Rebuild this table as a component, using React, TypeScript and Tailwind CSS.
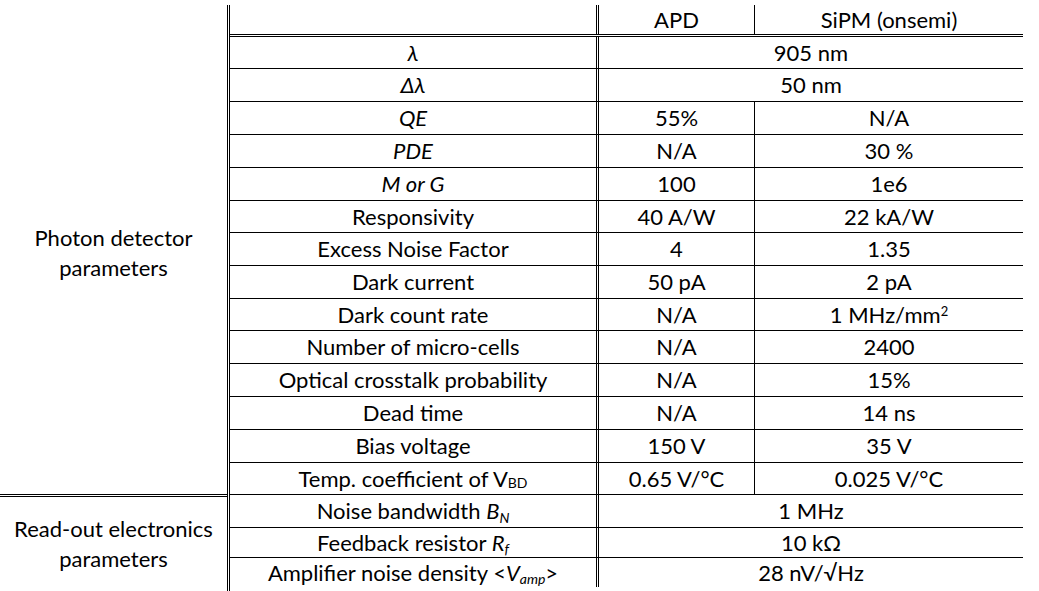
import React from "react";

type Row = {
  label: React.ReactNode;
  apd?: React.ReactNode;
  sipm?: React.ReactNode;
  both?: React.ReactNode;
  h: string;
  last?: boolean;
};

const detectorRows: Row[] = [
  { label: <i>λ</i>, both: "905 nm", h: "h-[32px]" },
  { label: <i>Δλ</i>, both: "50 nm", h: "h-[33px]" },
  { label: <i>QE</i>, apd: "55%", sipm: "N/A", h: "h-[33px]" },
  { label: <i>PDE</i>, apd: "N/A", sipm: "30 %", h: "h-[33px]" },
  { label: <i>M or G</i>, apd: "100", sipm: "1e6", h: "h-[33px]" },
  { label: "Responsivity", apd: "40 A/W", sipm: "22 kA/W", h: "h-[32px]" },
  { label: "Excess Noise Factor", apd: "4", sipm: "1.35", h: "h-[33px]" },
  { label: "Dark current", apd: "50 pA", sipm: "2 pA", h: "h-[33px]" },
  {
    label: "Dark count rate",
    apd: "N/A",
    sipm: (
      <span>
        1 MHz/mm<sup className="text-[13px]">2</sup>
      </span>
    ),
    h: "h-[32px]",
  },
  { label: "Number of micro-cells", apd: "N/A", sipm: "2400", h: "h-[33px]" },
  { label: "Optical crosstalk probability", apd: "N/A", sipm: "15%", h: "h-[33px]" },
  { label: "Dead time", apd: "N/A", sipm: "14 ns", h: "h-[33px]" },
  { label: "Bias voltage", apd: "150 V", sipm: "35 V", h: "h-[33px]" },
  {
    label: (
      <span>
        Temp. coefficient of V<span className="text-[14px] align-[-1px]">BD</span>
      </span>
    ),
    apd: "0.65 V/°C",
    sipm: "0.025 V/°C",
    h: "h-[32px]",
  },
];

const readoutRows: Row[] = [
  {
    label: (
      <span>
        Noise bandwidth <i>B</i>
        <sub className="text-[14px] italic">N</sub>
      </span>
    ),
    both: "1 MHz",
    h: "h-[33px]",
  },
  {
    label: (
      <span>
        Feedback resistor <i>R</i>
        <sub className="text-[14px] italic">f</sub>
      </span>
    ),
    both: "10 kΩ",
    h: "h-[30px]",
  },
  {
    label: (
      <span>
        Amplifier noise density &lt;<i>V</i>
        <sub className="text-[14px] italic">amp</sub>&gt;
      </span>
    ),
    both: "28 nV/√Hz",
    h: "h-[29px]",
    last: true,
  },
];

function TableRow({ row }: { row: Row }) {
  return (
    <div className={`flex ${row.h} ${row.last ? "" : "border-b border-black"}`}>
      <div className="w-[366px] flex items-center justify-center">{row.label}</div>
      {row.both !== undefined ? (
        <div className="flex-1 flex items-center justify-center border-l-[3px] border-double border-black">
          {row.both}
        </div>
      ) : (
        <>
          <div className="w-[158px] flex items-center justify-center border-l-[3px] border-double border-black">
            {row.apd}
          </div>
          <div className="flex-1 flex items-center justify-center border-l border-black">
            {row.sipm}
          </div>
        </>
      )}
    </div>
  );
}

export default function App() {
  return (
    <div
      className="w-[1039px] h-[591px] bg-white text-black text-[22px] leading-none pt-[5px] flex"
      style={{ fontFamily: "Lato, 'Noto Sans', sans-serif" }}
    >
      {/* Group labels */}
      <div className="w-[227px] flex flex-col">
        <div className="h-[32px]" />
        <div className="h-[460px] border-b-[3px] border-double border-black flex items-center justify-center text-center leading-[30px] pb-[26px]">
          <span>
            Photon detector
            <br />
            parameters
          </span>
        </div>
        <div className="flex-1 flex items-center justify-center text-center leading-[30px]">
          <span>
            Read-out electronics
            <br />
            parameters
          </span>
        </div>
      </div>

      {/* Parameter table */}
      <div className="w-[796px] border-l-[3px] border-double border-black flex flex-col">
        <div className="flex h-[32px] border-b-[3px] border-double border-black">
          <div className="w-[366px]" />
          <div className="w-[158px] flex items-center justify-center border-l-[3px] border-double border-black">
            APD
          </div>
          <div className="flex-1 flex items-center justify-center border-l border-black">
            SiPM (onsemi)
          </div>
        </div>
        {detectorRows.map((row, i) => (
          <TableRow key={`d${i}`} row={row} />
        ))}
        {readoutRows.map((row, i) => (
          <TableRow key={`r${i}`} row={row} />
        ))}
      </div>
    </div>
  );
}
